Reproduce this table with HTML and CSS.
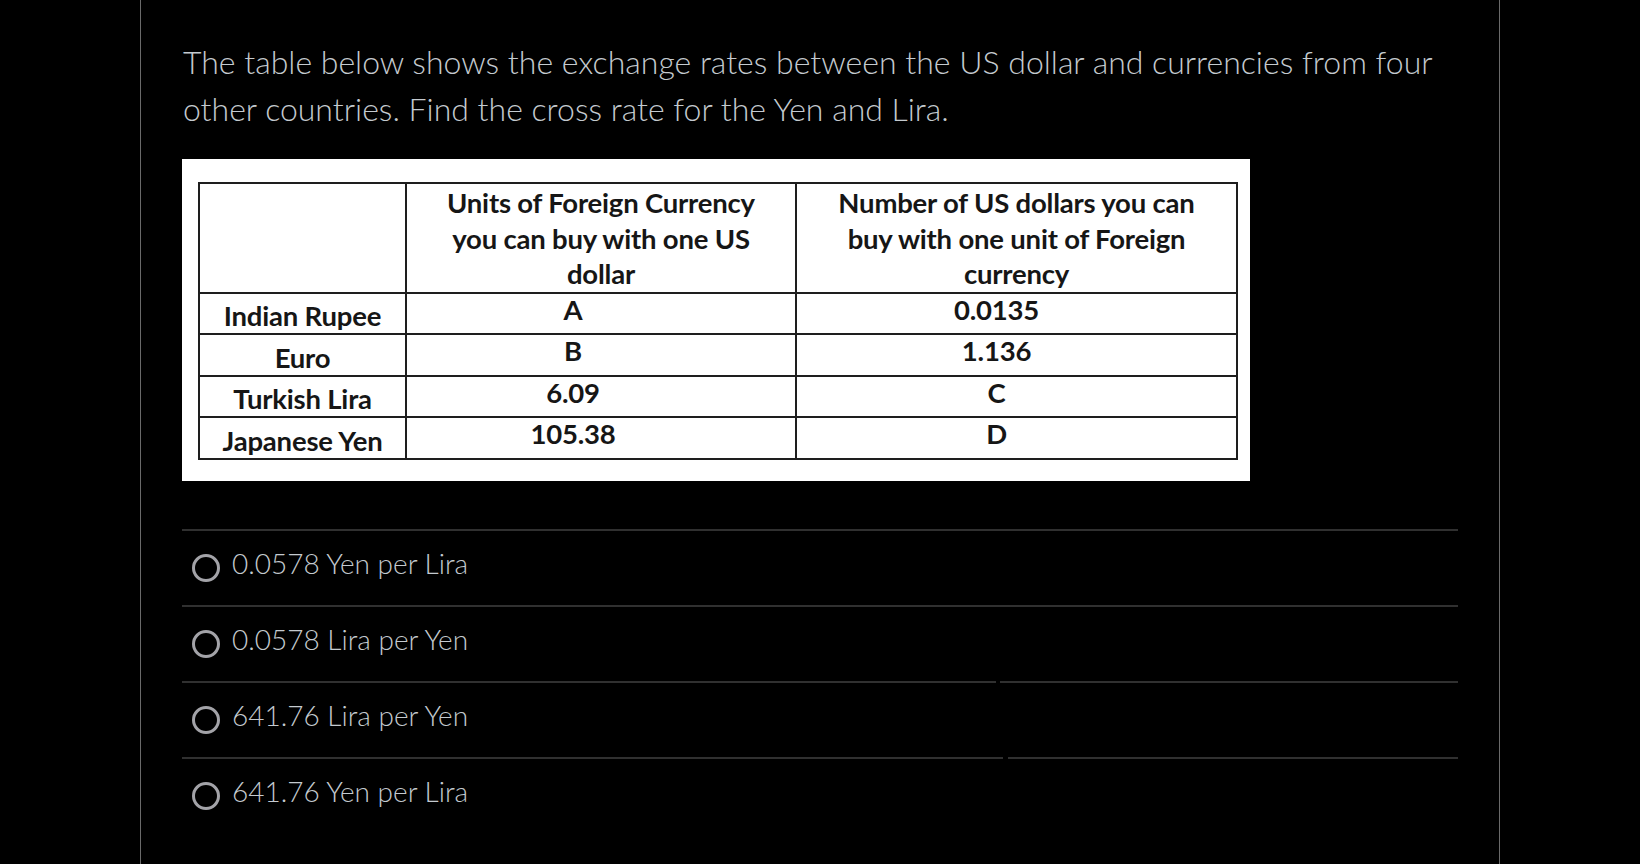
FILE: index.html
```html
<!DOCTYPE html>
<html lang="en">
<head>
<meta charset="utf-8">
<title>Cross rate question</title>
<link rel="stylesheet" href="styles.css">
</head>
<body>
<main class="panel">
  <p class="question">The table below shows the exchange rates between the US dollar and currencies from four other countries. Find the cross rate for the Yen and Lira.</p>
  <div class="figure">
    <table class="rates">
      <colgroup>
        <col class="c1"><col class="c2"><col class="c3">
      </colgroup>
      <thead>
        <tr>
          <th></th>
          <th>Units of Foreign Currency<br>you can buy with one US<br>dollar</th>
          <th>Number of US dollars you can<br>buy with one unit of Foreign<br>currency</th>
        </tr>
      </thead>
      <tbody>
        <tr><td class="label">Indian Rupee</td><td class="v2">A</td><td class="v3">0.0135</td></tr>
        <tr><td class="label">Euro</td><td class="v2">B</td><td class="v3">1.136</td></tr>
        <tr><td class="label">Turkish Lira</td><td class="v2">6.09</td><td class="v3">C</td></tr>
        <tr><td class="label">Japanese Yen</td><td class="v2">105.38</td><td class="v3">D</td></tr>
      </tbody>
    </table>
  </div>
  <ul class="options">
    <li class="option"><span class="radio"></span><span class="opt-text">0.0578 Yen per Lira</span></li>
    <li class="option"><span class="radio"></span><span class="opt-text">0.0578 Lira per Yen</span></li>
    <li class="option gap-a"><span class="radio"></span><span class="opt-text">641.76 Lira per Yen</span></li>
    <li class="option gap-b"><span class="radio"></span><span class="opt-text">641.76 Yen per Lira</span></li>
  </ul>
</main>
</body>
</html>
```

FILE: styles.css
```css
html, body {
  margin: 0;
  padding: 0;
  background: #000;
}

body {
  font-family: "Lato", "Liberation Sans", sans-serif;
  color: #c9cfd4;
}

.panel {
  box-sizing: border-box;
  margin-left: 140px;
  width: 1360px;
  min-height: 100vh;
  border-left: 1px solid #6a6a6a;
  border-right: 1px solid #6a6a6a;
  padding: 38px 41px 40px 41px;
}

.question {
  margin: 0;
  font-family: "Lato Light", "Lato", "Liberation Sans", sans-serif;
  font-size: 32px;
  font-weight: 300;
  line-height: 47px;
  color: #c4cacf;
  padding-left: 1px;
}

.figure {
  margin-top: 27px;
  width: 1068px;
  height: 322px;
  box-sizing: border-box;
  background: #fff;
  padding: 23px 14px 0 16px;
}

.rates {
  width: 1038px;
  border-collapse: collapse;
  border: 2px solid #1e1e1e;
  font-family: "Lato", "Liberation Sans", sans-serif;
  font-weight: 700;
  color: #161616;
  font-size: 27.5px;
  table-layout: fixed;
}

.c1 { width: 207px; }
.c2 { width: 390px; }
.c3 { width: 441px; }

.rates th,
.rates td {
  border: 2px solid #1e1e1e;
  text-align: center;
  padding: 0;
  letter-spacing: -0.2px;
}

.rates th {
  line-height: 35.5px;
  font-weight: 700;
  vertical-align: top;
  padding-top: 1px;
}

.rates td {
  height: 38.5px;
  line-height: 32px;
}

.rates td.label {
  vertical-align: bottom;
  padding-bottom: 1px;
}

.rates td.v2 {
  padding-right: 56px;
  vertical-align: top;
}

.rates td.v3 {
  padding-right: 40px;
  vertical-align: top;
}

.options {
  list-style: none;
  margin: 48px 0 0 0;
  padding: 0;
}

.option {
  display: flex;
  align-items: center;
  gap: 12px;
  height: 74px;
  border-top: 2px solid #303030;
  padding-left: 10px;
}

.option.gap-a {
  border-top: 0;
  padding-top: 2px;
  background:
    linear-gradient(to right, #303030 0, #303030 814px, transparent 814px, transparent 818px, #303030 818px) top left / 100% 2px no-repeat;
}

.option.gap-b {
  border-top: 0;
  padding-top: 2px;
  background:
    linear-gradient(to right, #303030 0, #303030 821px, transparent 821px, transparent 826px, #303030 826px) top left / 100% 2px no-repeat;
}

.radio {
  box-sizing: border-box;
  width: 28px;
  height: 28px;
  border-radius: 50%;
  border: 3px solid #a3a3a8;
  flex: none;
}

.opt-text {
  font-family: "Lato Light", "Lato", "Liberation Sans", sans-serif;
  font-size: 28px;
  font-weight: 300;
  color: #c4cacf;
  line-height: 34px;
  padding-bottom: 11px;
}
```
